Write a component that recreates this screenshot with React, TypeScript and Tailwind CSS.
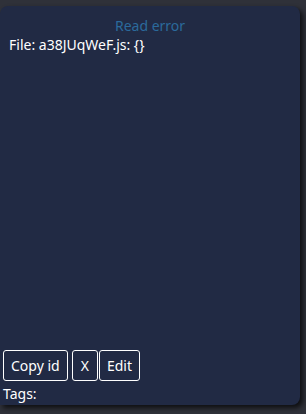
export default function App() {
  return (
    <div className="w-[306px] h-[414px] bg-[#2f3139] pt-[6px] font-['Noto_Sans',sans-serif] text-[14px] text-white">
      <div className="w-[300px] h-[399px] bg-[#212a44] rounded-r-lg rounded-tl-lg shadow-[3px_3px_5px_rgba(0,0,0,0.7)] flex flex-col">
        <div className="pt-[10px] text-center text-[#2b6a9c] leading-5">Read error</div>
        <div className="px-[9px] leading-5 -mt-[1px]">File: a38JUqWeF.js: {"{}"}</div>
        <div className="flex-1" />
        <div className="flex items-center pl-[3px]">
          <button className="h-[31px] px-[7px] border border-white rounded-[3px] mr-[4px]">Copy id</button>
          <button className="h-[31px] px-[8px] border border-white rounded-[3px] mr-[1px]">X</button>
          <button className="h-[31px] px-[7px] border border-white rounded-[3px]">Edit</button>
        </div>
        <div className="pl-[3px] leading-5 pt-[3px] pb-[1px]">Tags:</div>
      </div>
    </div>
  );
}
